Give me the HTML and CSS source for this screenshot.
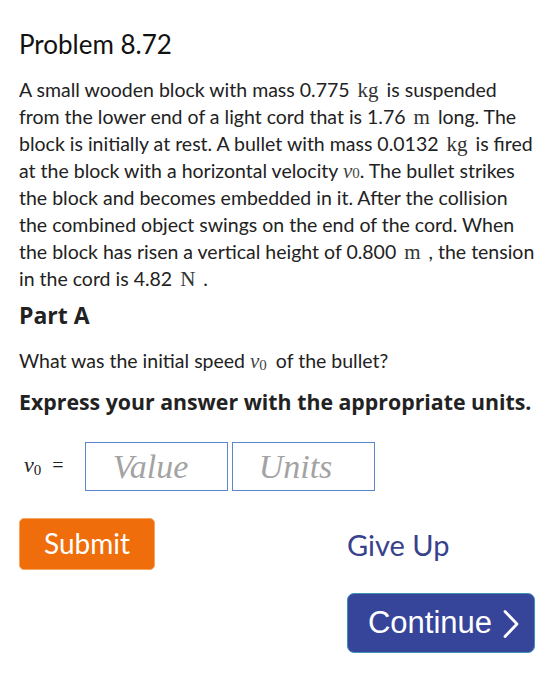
FILE: index.html
```html
<!DOCTYPE html>
<html>
<head>
<meta charset="utf-8">
<link rel="stylesheet" href="styles.css">
</head>
<body>
<div class="page">
  <h1 class="title">Problem 8.72</h1>
  <p class="text">A small wooden block with mass 0.775 <span class="unit">kg</span> is suspended<br>from the lower end of a light cord that is 1.76 <span class="unit">m</span> long. The<br>block is initially at rest. A bullet with mass 0.0132 <span class="unit">kg</span> is fired<br>at the block with a horizontal velocity <span class="var">v</span><span class="sub0">0</span>. The bullet strikes<br>the block and becomes embedded in it. After the collision<br>the combined object swings on the end of the cord. When<br>the block has risen a vertical height of 0.800 <span class="unit">m</span> , the tension<br>in the cord is 4.82 <span class="unit">N</span> .</p>
  <h2 class="part">Part A</h2>
  <p class="question">What was the initial speed <span class="var">v</span><span class="qsub">0</span> of the bullet?</p>
  <p class="express">Express your answer with the appropriate units.</p>
  <div class="answer">
    <span class="label"><span class="var">v</span><span class="lsub">0</span> =</span>
    <div class="box value">Value</div>
    <div class="box units">Units</div>
  </div>
  <div class="actions">
    <button class="submit">Submit</button>
    <span class="giveup">Give Up</span>
  </div>
  <div class="continue-row">
    <button class="continue"><span>Continue</span><svg class="chev" width="18" height="30" viewBox="0 0 18 30"><path d="M3 2.5 L15 15 L3 27.5" fill="none" stroke="#fff" stroke-width="2.8" stroke-linecap="round" stroke-linejoin="round"/></svg></button>
  </div>
</div>
</body>
</html>
```
FILE: styles.css
```css
html, body { margin: 0; padding: 0; background: #fff; }
.page {
  padding: 28px 2px 0 19px;
  font-family: "Lato", "Open Sans", sans-serif;
  color: #222;
}
.title {
  font-weight: 400;
  font-size: 26px;
  line-height: 32px;
  margin: 0 0 16px 0;
  color: #111;
}
.text {
  font-size: 19.5px;
  line-height: 27px;
  margin: 0;
  white-space: nowrap;
}
.unit { font-family: "Liberation Serif", serif; font-size: 21px; line-height: 1; margin: 0 3px; color: #333; }
.var { font-family: "Liberation Serif", serif; font-style: italic; font-size: 21px; line-height: 1; color: #444; }
.sub0 { font-family: "Liberation Serif", serif; font-size: 15px; line-height: 1; color: #444; }
.qsub { font-family: "Liberation Serif", serif; font-size: 15px; line-height: 1; color: #444; vertical-align: -2px; margin-right: 4px; }
.part {
  font-family: "Open Sans", sans-serif;
  font-size: 23px;
  font-weight: 700;
  margin: 8px 0 0 0;
  line-height: 31px;
}
.question {
  font-size: 19.5px;
  line-height: 27px;
  margin: 16px 0 0 0;
}
.express {
  font-family: "Open Sans", sans-serif;
  font-size: 21.3px;
  font-weight: 700;
  line-height: 30px;
  margin: 13px 0 0 0;
}
.answer {
  display: flex;
  align-items: center;
  margin-top: 25px;
}
.label {
  width: 66px;
  padding-left: 5px;
  box-sizing: border-box;
  font-family: "Liberation Serif", serif;
  font-size: 20px;
  color: #222;
}
.label .var { font-size: 22px; color: #222; }
.lsub { font-size: 15px; vertical-align: -3px; margin-right: 6px; }
.box {
  width: 143px;
  height: 49px;
  border: 1.5px solid #5b87c9;
  box-sizing: border-box;
  margin-right: 4px;
  font-family: "Liberation Serif", serif;
  font-style: italic;
  font-size: 34px;
  color: #a3a3a3;
  display: flex;
  align-items: center;
  justify-content: center;
}
.value { padding-right: 12px; }
.units { padding-right: 16px; }
.actions {
  display: flex;
  align-items: center;
  margin-top: 27px;
}
.submit {
  background: #ef6d0a;
  border: 1px solid #f4a560;
  border-radius: 5px;
  color: #fff;
  font-family: "Lato", sans-serif;
  font-size: 28px;
  width: 136px;
  height: 52px;
  padding: 0 0 2px 0;
}
.giveup {
  margin-left: 192px;
  font-size: 29px;
  color: #38428c;
}
.continue-row {
  display: flex;
  justify-content: flex-end;
  margin-top: 23px;
  padding-right: 19px;
}
.continue {
  background: #36449a;
  border: 1px solid #3d92b8;
  border-radius: 7px;
  color: #fff;
  font-family: "Liberation Sans", Arial, sans-serif;
  font-size: 31px;
  width: 188px;
  height: 60px;
  padding: 0 0 0 6px;
  display: flex;
  align-items: center;
  justify-content: center;
  gap: 10px;
}
.chev { margin-top: 1px; }
```
